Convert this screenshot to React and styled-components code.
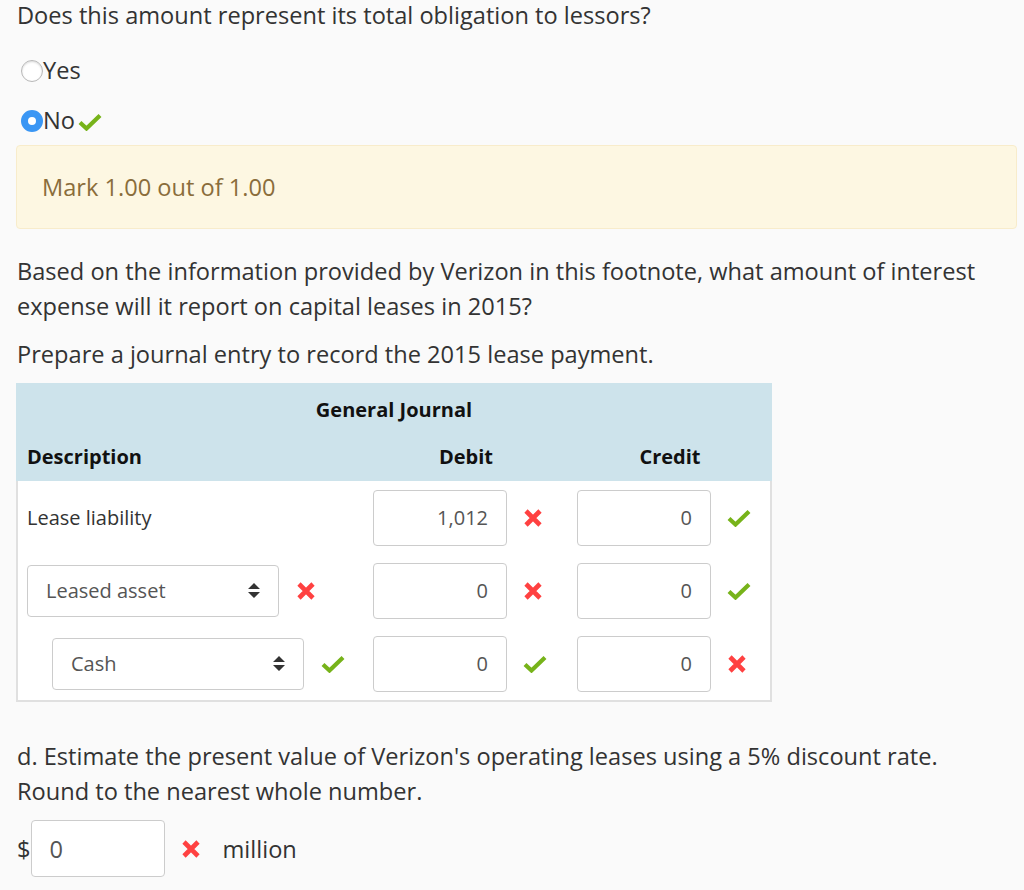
import React from 'react'
import styled, {createGlobalStyle} from 'styled-components'

const Global = createGlobalStyle`
  html, body {
    margin: 0;
    padding: 0;
    background: #fafafa;
  }
  body {
    font-family: 'Open Sans', 'Liberation Sans', sans-serif;
    color: #333;
    font-size: 23.6px;
  }
`

const Page = styled.div`
  padding: 0 7px 0 17px;
  width: 1024px;
  box-sizing: border-box;
`

const P = styled.p`
  margin: ${p => p.$m || '0'};
  line-height: ${p => p.$lh || '35px'};
`

const Options = styled.div`
  display: flex;
  flex-direction: column;
`

const Option = styled.label`
  display: flex;
  align-items: center;
  height: 50px;
  padding-left: 4px;
`

const Radio = styled.span`
  width: 22px;
  height: 22px;
  border-radius: 50%;
  box-sizing: border-box;
  border: ${p => (p.$on ? '7px solid #3a96f4' : '1px solid #b8b8b8')};
  background: #fff;
  box-shadow: ${p => (p.$on ? 'none' : 'inset 0 1px 2px rgba(0,0,0,0.15)')};
  margin-top: 2px;
`

const Notice = styled.div`
  height: 84px;
  box-sizing: border-box;
  border: 1px solid #f8eccb;
  border-radius: 4px;
  background: #fdf7e2;
  color: #8a6d3b;
  display: flex;
  align-items: center;
  padding-left: 25px;
  margin-left: -1px;
`

const Journal = styled.div`
  width: 756px;
  margin: 11px 0 0 -1px;
`

const Head = styled.div`
  background: #cde3eb;
  display: grid;
  grid-template-columns: 348px 204px 204px;
  grid-template-rows: 48px 50px;
  font-size: 20px;
  font-weight: 700;
  color: #111;
`

const Title = styled.div`
  grid-column: 1 / 4;
  display: flex;
  align-items: center;
  justify-content: center;
  padding-top: 4px;
`

const HeadCell = styled.div`
  display: flex;
  align-items: center;
  justify-content: ${p => (p.$left ? 'flex-start' : 'center')};
  padding-left: ${p => (p.$left ? '11px' : '0')};
`

const Body = styled.div`
  background: #fff;
  border: 2px solid #e0e0e0;
  border-top: 0;
  font-size: 20px;
`

const Row = styled.div`
  display: grid;
  grid-template-columns: 346px 204px 202px;
  height: 73px;
  align-items: center;
`

const Desc = styled.div`
  display: flex;
  align-items: center;
  padding-left: ${p => p.$indent || '9px'};
  gap: 17px;
`

const Amount = styled.div`
  display: flex;
  align-items: center;
  padding-left: 9px;
  gap: 16px;
`

const Box = styled.div`
  width: 134px;
  height: ${p => p.$h || '56px'};
  box-sizing: border-box;
  border: 1px solid #ccc;
  border-radius: 4px;
  background: #fff;
  color: #555;
  display: flex;
  align-items: center;
  justify-content: ${p => (p.$left ? 'flex-start' : 'flex-end')};
  padding: 0 18px;
`

const Select = styled.div`
  width: 252px;
  height: 52px;
  box-sizing: border-box;
  border: 1px solid #ccc;
  border-radius: 4px;
  background: #fff;
  color: #555;
  display: flex;
  align-items: center;
  justify-content: space-between;
  padding: 0 18px;
`

const Answer = styled.div`
  display: flex;
  align-items: center;
  margin-top: 11px;
`

const Unit = styled.span`
  margin-left: 22px;
`

const Check = ({style}) => (
  <svg width='24' height='18' viewBox='0 0 24 18' style={{flexShrink: 0, ...style}}>
    <path d='M2 9.5 L8.5 15.5 L22 2.5' fill='none' stroke='#77b31a' strokeWidth='4.2' />
  </svg>
)

const Cross = ({style}) => (
  <svg width='20' height='20' viewBox='0 0 20 20' style={{flexShrink: 0, ...style}}>
    <path d='M3 3 L17 17 M17 3 L3 17' fill='none' stroke='#ff4141' strokeWidth='4.6' />
  </svg>
)

const Sort = () => (
  <svg width='12' height='17' viewBox='0 0 12 17'>
    <path d='M0 7 L6 1 L12 7 Z M0 10 L12 10 L6 16 Z' fill='#333' />
  </svg>
)

export default function App () {
  return (
    <Page>
      <Global />
      <P $lh='30px'>Does this amount represent its total obligation to lessors?</P>
      <Options style={{marginTop: 15}}>
        <Option><Radio />Yes</Option>
        <Option><Radio $on />No<Check style={{marginLeft: 3, marginTop: 4}} /></Option>
      </Options>
      <Notice>Mark 1.00 out of 1.00</Notice>
      <P $m='25px 0 0'>
        Based on the information provided by Verizon in this footnote, what amount of interest
        expense will it report on capital leases in 2015?
      </P>
      <P $m='13px 0 0'>Prepare a journal entry to record the 2015 lease payment.</P>
      <Journal>
        <Head>
          <Title>General Journal</Title>
          <HeadCell $left>Description</HeadCell>
          <HeadCell>Debit</HeadCell>
          <HeadCell>Credit</HeadCell>
        </Head>
        <Body>
          <Row>
            <Desc>Lease liability</Desc>
            <Amount><Box>1,012</Box><Cross /></Amount>
            <Amount><Box>0</Box><Check /></Amount>
          </Row>
          <Row>
            <Desc><Select>Leased asset<Sort /></Select><Cross /></Desc>
            <Amount><Box>0</Box><Cross /></Amount>
            <Amount><Box>0</Box><Check /></Amount>
          </Row>
          <Row>
            <Desc $indent='34px'><Select>Cash<Sort /></Select><Check /></Desc>
            <Amount><Box>0</Box><Check /></Amount>
            <Amount><Box>0</Box><Cross /></Amount>
          </Row>
        </Body>
      </Journal>
      <P $m='37px 0 0'>
        d. Estimate the present value of Verizon's operating leases using a 5% discount rate.
        <br />
        Round to the nearest whole number.
      </P>
      <Answer>
        <span>$</span>
        <Box $left $h='57px'>0</Box>
        <Cross style={{marginLeft: 16}} />
        <Unit>million</Unit>
      </Answer>
    </Page>
  )
}
